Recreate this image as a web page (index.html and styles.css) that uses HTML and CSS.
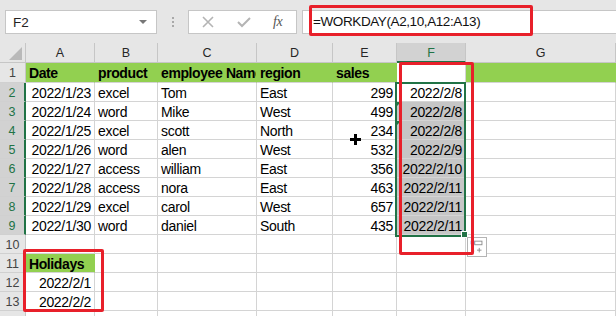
FILE: index.html
```html
<!DOCTYPE html>
<html>
<head>
<meta charset="utf-8">
<link rel="stylesheet" href="styles.css">
</head>
<body>
<div class="app">
  <div class="topbar">
    <div class="namebox"><span class="nb-text">F2</span><span class="nb-arrow"></span></div>
    <div class="dots"><i></i><i></i><i></i></div>
    <div class="btnbox">
      <svg class="ico-x" width="12" height="12" viewBox="0 0 12 12"><path d="M1 1L11 11M11 1L1 11" stroke="#b4b4b4" stroke-width="1.6" fill="none"/></svg>
      <svg class="ico-ok" width="14" height="12" viewBox="0 0 14 12"><path d="M1 6L5 10L13 2" stroke="#b4b4b4" stroke-width="2" fill="none"/></svg>
      <span class="fx">fx</span>
    </div>
    <div class="formula">=WORKDAY(A2,10,A12:A13)</div>
  </div>

  <div class="sheet">
    <div class="corner"><svg width="13" height="13" viewBox="0 0 13 13"><path d="M13 0L13 13L0 13Z" fill="#b9b9b9"/></svg></div>
    <div class="ch">A</div><div class="ch">B</div><div class="ch">C</div><div class="ch">D</div><div class="ch">E</div><div class="ch sel">F</div><div class="ch">G</div>

    <div class="rh">1</div>
    <div class="c g b">Date</div><div class="c g b">product</div><div class="c g b">employee Name</div><div class="c g b">region</div><div class="c g b">sales</div><div class="c"></div><div class="c g"></div>

    <div class="rh sel">2</div>
    <div class="c r">2022/1/23</div><div class="c">excel</div><div class="c">Tom</div><div class="c">East</div><div class="c r">299</div><div class="c r">2022/2/8</div><div class="c"></div>

    <div class="rh sel">3</div>
    <div class="c r">2022/1/24</div><div class="c">word</div><div class="c">Mike</div><div class="c">West</div><div class="c r">499</div><div class="c r s tri">2022/2/8</div><div class="c"></div>

    <div class="rh sel">4</div>
    <div class="c r">2022/1/25</div><div class="c">excel</div><div class="c">scott</div><div class="c">North</div><div class="c r">234</div><div class="c r s tri">2022/2/8</div><div class="c"></div>

    <div class="rh sel">5</div>
    <div class="c r">2022/1/26</div><div class="c">word</div><div class="c">alen</div><div class="c">West</div><div class="c r">532</div><div class="c r s">2022/2/9</div><div class="c"></div>

    <div class="rh sel">6</div>
    <div class="c r">2022/1/27</div><div class="c">access</div><div class="c">william</div><div class="c">East</div><div class="c r">356</div><div class="c r s">2022/2/10</div><div class="c"></div>

    <div class="rh sel">7</div>
    <div class="c r">2022/1/28</div><div class="c">access</div><div class="c">nora</div><div class="c">East</div><div class="c r">463</div><div class="c r s">2022/2/11</div><div class="c"></div>

    <div class="rh sel">8</div>
    <div class="c r">2022/1/29</div><div class="c">excel</div><div class="c">carol</div><div class="c">West</div><div class="c r">657</div><div class="c r s">2022/2/11</div><div class="c"></div>

    <div class="rh sel">9</div>
    <div class="c r">2022/1/30</div><div class="c">word</div><div class="c">daniel</div><div class="c">South</div><div class="c r">435</div><div class="c r s">2022/2/11</div><div class="c"></div>

    <div class="rh">10</div>
    <div class="c"></div><div class="c"></div><div class="c"></div><div class="c"></div><div class="c"></div><div class="c"></div><div class="c"></div>

    <div class="rh">11</div>
    <div class="c g b">Holidays</div><div class="c"></div><div class="c"></div><div class="c"></div><div class="c"></div><div class="c"></div><div class="c"></div>

    <div class="rh">12</div>
    <div class="c r">2022/2/1</div><div class="c"></div><div class="c"></div><div class="c"></div><div class="c"></div><div class="c"></div><div class="c"></div>

    <div class="rh">13</div>
    <div class="c r">2022/2/2</div><div class="c"></div><div class="c"></div><div class="c"></div><div class="c"></div><div class="c"></div><div class="c"></div>

    <div class="rh"></div>
    <div class="c"></div><div class="c"></div><div class="c"></div><div class="c"></div><div class="c"></div><div class="c"></div><div class="c"></div>
  </div>

  <div class="selection"></div>
  <div class="handle"></div>
  <div class="paste">
    <svg width="20" height="20" viewBox="0 0 20 20">
      <rect x="7.5" y="3.5" width="8" height="4" fill="#fff" stroke="#8a8a8a"/>
      <rect x="3" y="3" width="4" height="4" fill="#6f7fd6"/>
      <path d="M4.5 8V15" stroke="#9a9a9a" stroke-dasharray="1 1"/>
      <path d="M6 14.5H8" stroke="#9a9a9a" stroke-dasharray="1 1"/>
      <path d="M10 13.5H15M12.5 11V16" stroke="#8a8a8a"/>
    </svg>
  </div>
  <svg class="cursor" width="11" height="11" viewBox="0 0 11 11"><path d="M4 0H7V4H11V7H7V11H4V7H0V4H4Z" fill="#000"/></svg>

  <div class="redbox rb-formula"></div>
  <div class="redbox rb-col"></div>
  <div class="redbox rb-hol"></div>
</div>
</body>
</html>
```

FILE: styles.css
```css
html, body {
  margin: 0;
  padding: 0;
  background: #ffffff;
}

.app {
  position: relative;
  width: 616px;
  height: 316px;
  overflow: hidden;
  font-family: "Liberation Sans", Arial, sans-serif;
  color: #000;
}

.topbar {
  height: 43px;
  box-sizing: border-box;
  background: #e6e6e6;
  display: flex;
  align-items: flex-start;
  padding-top: 10px;
}

.namebox {
  margin-left: 5px;
  width: 152px;
  height: 24px;
  box-sizing: border-box;
  background: #fff;
  border: 1px solid #c6c6c6;
  display: flex;
  align-items: center;
  justify-content: space-between;
  padding: 0 9px 0 7px;
  font-size: 13.5px;
  color: #222;
}

.nb-arrow {
  width: 0;
  height: 0;
  border-left: 4px solid transparent;
  border-right: 4px solid transparent;
  border-top: 4px solid #777;
}

.dots {
  width: 31px;
  height: 24px;
  display: flex;
  flex-direction: column;
  align-items: center;
  justify-content: center;
  gap: 2px;
}

.dots i {
  display: block;
  width: 2px;
  height: 2px;
  background: #a8a8a8;
}

.btnbox {
  width: 109px;
  height: 24px;
  box-sizing: border-box;
  background: #fff;
  border: 1px solid #c6c6c6;
  display: flex;
  align-items: center;
  padding-left: 13px;
}

.ico-x { margin-right: 23px; }
.ico-ok { margin-right: 22px; }

.fx {
  font-family: "Liberation Serif", "Times New Roman", serif;
  font-style: italic;
  font-size: 14px;
  color: #555;
  letter-spacing: -0.5px;
}

.formula {
  margin-left: 5px;
  flex: 1;
  height: 24px;
  box-sizing: border-box;
  background: #fff;
  border: 1px solid #c6c6c6;
  border-right: none;
  padding-left: 10px;
  line-height: 22px;
  font-size: 13.5px;
  letter-spacing: -0.4px;
  color: #111;
}

.sheet {
  display: grid;
  grid-template-columns: 26px 69px 63px 99px 76px 64px 69px 150px;
  grid-template-rows: 20px 20px repeat(13, 19px);
}

.corner {
  background: #e6e6e6;
  border-right: 1px solid #c6c6c6;
  border-bottom: 1px solid #c6c6c6;
  box-sizing: border-box;
  display: flex;
  align-items: flex-end;
  justify-content: flex-end;
  padding: 0 3px 2px 0;
}

.ch {
  background: #e6e6e6;
  border-right: 1px solid #c6c6c6;
  border-bottom: 1px solid #c6c6c6;
  box-sizing: border-box;
  text-align: center;
  font-size: 12.5px;
  line-height: 20px;
  color: #262626;
}

.ch.sel {
  background: #d2d2d2;
  color: #217346;
  border-bottom: 2px solid #217346;
}

.rh {
  background: #e6e6e6;
  border-right: 1px solid #c6c6c6;
  border-bottom: 1px solid #d0d0d0;
  box-sizing: border-box;
  text-align: center;
  font-size: 12.5px;
  line-height: 18px;
  padding-top: 1px;
  color: #444;
}

.rh.sel {
  background: #d2d2d2;
  color: #217346;
  border-right: 2px solid #217346;
}

.c {
  position: relative;
  border-right: 1px solid #d4d4d4;
  border-bottom: 1px solid #d4d4d4;
  box-sizing: border-box;
  padding: 1px 3px 0 3px;
  font-size: 14px;
  letter-spacing: -0.3px;
  line-height: 18px;
  white-space: nowrap;
  overflow: hidden;
  background: #fff;
}

.c.r { text-align: right; }
.c.b { font-weight: bold; letter-spacing: -0.4px; }
.c.g { background: #92d050; border-right-color: #92d050; }
.c.s { background: #c6c6c6; }

.c.tri::before {
  content: "";
  position: absolute;
  left: 0;
  top: 0;
  border-top: 4px solid #217346;
  border-right: 4px solid transparent;
}

.selection {
  position: absolute;
  left: 395px;
  top: 82px;
  width: 71px;
  height: 155px;
  box-sizing: border-box;
  border: 2px solid #217346;
}

.handle {
  position: absolute;
  left: 461px;
  top: 231px;
  width: 7px;
  height: 7px;
  box-sizing: border-box;
  background: #217346;
  border: 1px solid #fff;
}

.paste {
  position: absolute;
  left: 467px;
  top: 237px;
  width: 20px;
  height: 20px;
  box-sizing: border-box;
  border: 1px solid #b4b4b4;
  background: #fff;
  display: flex;
  align-items: center;
  justify-content: center;
}

.paste svg { display: block; }

.cursor {
  position: absolute;
  left: 350px;
  top: 134px;
}

.redbox {
  position: absolute;
  box-sizing: border-box;
  border: 3px solid #e8202a;
  border-radius: 2px;
}

.rb-formula { left: 309px; top: 5px; width: 224px; height: 31px; }
.rb-col { left: 399px; top: 62px; width: 75px; height: 193px; }
.rb-hol { left: 23px; top: 249px; width: 81px; height: 63px; }
```
